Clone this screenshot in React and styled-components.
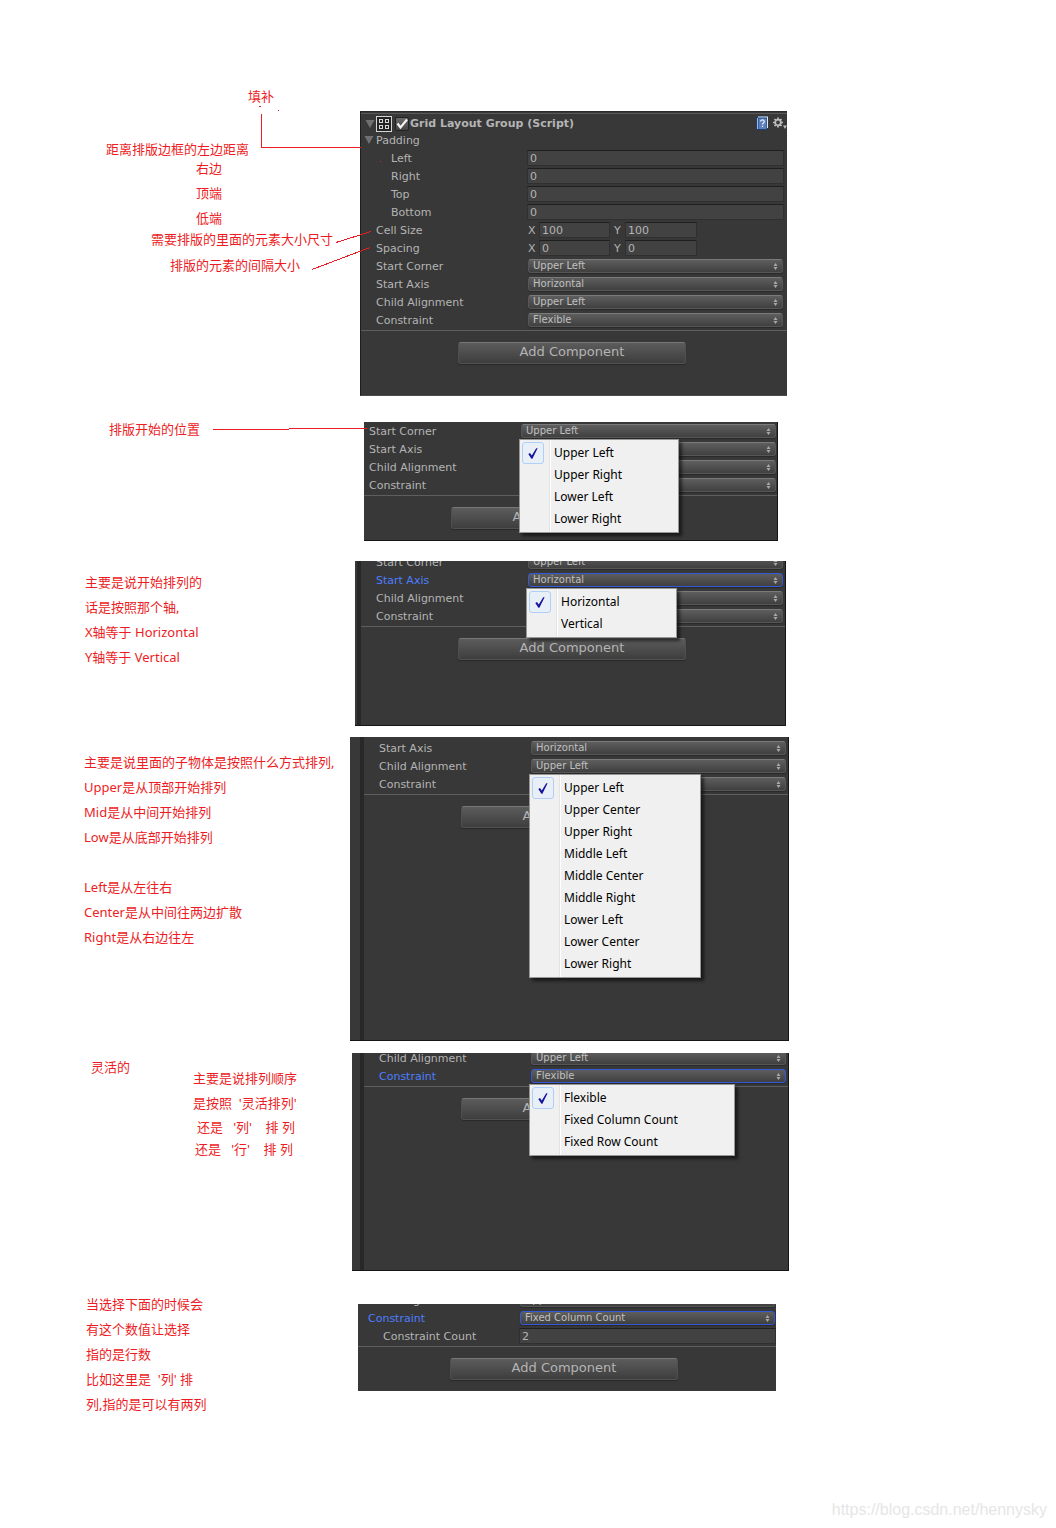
import React, { useId } from 'react';
import styled, { createGlobalStyle, css } from 'styled-components';

const GlobalStyle = createGlobalStyle`
  *, *::before, *::after {
    box-sizing: border-box;
  }
  body {
    margin: 0;
    background: #fff;
  }
`

/* Page and annotations */

const Page = styled.main`
  display: flex;
  flex-direction: column;
  padding: 87px 0 8px;
  font-family: "Noto Sans", "Noto Sans CJK SC", sans-serif;
  font-size: 13px;
`
const Section = styled.section`
  position: relative;
  display: grid;
  grid-template-columns: ${p => p.$left}px minmax(0, ${p => p.$width}px);
  align-items: start;
  margin-top: ${p => p.$gap || 0}px;
`
const NoteColumns = styled.div`
  display: flex;
  align-items: flex-start;
`
const Notes = styled.div`
  display: flex;
  flex-direction: column;
  padding: ${p => p.$top || 0}px 0 0 ${p => p.$indent || 0}px;
`
const Note = styled.p`
  margin: ${p => p.$gap || 0}px 0 0;
  padding-left: ${p => p.$indent || 0}px;
  height: ${p => p.$line || 25}px;
  line-height: ${p => p.$line || 25}px;
  font-family: "Noto Sans", "Noto Sans CJK SC", sans-serif;
  font-size: 13px;
  color: #ed1c24;
  white-space: pre;
`
const Leaders = styled.svg`
  position: absolute;
  top: 0;
  left: 0;
  fill: none;
  stroke: #ed1c24;
  shape-rendering: crispEdges;
  pointer-events: none;
`
const Watermark = styled.footer`
  margin-top: 83px;
  padding-right: 9px;
  text-align: right;
  font: 16px/20px "Liberation Sans", Arial, sans-serif;
  color: #e6e6e6;
`

/* Inspector panel */

const Panel = styled.div`
  display: flex;
  margin-top: ${p => p.$top || 0}px;
  overflow: hidden;
  background: #383838;
  font-family: "DejaVu Sans", Verdana, sans-serif;
  font-size: 11px;
  color: #b4b4b4;
  ${p => p.$edge === 'window' && css`
    border-left: 1px solid #1e1e1e;
    border-top: 1px solid #2a2a2a;
    border-bottom: 1px solid #4a4a4a;
  `}
  ${p => p.$edge === 'corner' && css`
    border-right: 1px solid #151515;
    border-bottom: 1px solid #151515;
  `}
`
const Gutter = styled.div`
  flex: none;
  width: ${p => p.$width}px;
  border-right: 4px solid #282828;
`
const Body = styled.div`
  flex: 1;
  min-width: 0;
  margin-top: -${p => p.$clip || 0}px;
  padding: ${p => p.$top || 0}px 0 ${p => p.$bottom}px;
`
const Header = styled.header`
  display: flex;
  align-items: center;
  height: 18px;
  padding: 2px 0 0 4px;
  border-top: 1px solid #5a5a5a;
`
const Title = styled.label`
  flex: 1;
  padding-left: 1px;
  font-weight: bold;
  white-space: nowrap;
`
const Toggle = styled.input`
  appearance: none;
  width: 14px;
  height: 14px;
  margin: 0 0 0 3px;
  border: 1px solid #222;
  border-radius: 2px;
  background: linear-gradient(#6a6a6a, #454545);
`
const ToggleBox = styled.span`
  position: relative;
  display: flex;
  svg {
    position: absolute;
    top: 0;
    left: 3px;
    pointer-events: none;
  }
`
const IconButton = styled.button`
  display: flex;
  margin: 0 0 2px 4px;
  padding: 0;
  border: 0;
  background: none;
`
const GridIconSlot = styled.span`
  display: flex;
  margin-left: 1px;
`
const Foldout = styled.button`
  display: flex;
  align-items: center;
  gap: 2px;
  height: 18px;
  padding: 0 0 0 3px;
  border: 0;
  background: none;
  font: inherit;
  color: inherit;
`
const Row = styled.div`
  position: relative;
  display: grid;
  grid-template-columns: 151px minmax(0, 1fr);
  align-items: center;
  height: 18px;
  padding: 0 ${p => p.$end}px 0 ${p => p.$inset}px;
`
const Label = styled.label`
  padding-left: ${p => (p.$nested ? 15 : 0)}px;
  color: ${p => (p.$active ? '#4c7eff' : 'inherit')};
  white-space: nowrap;
`
const Input = styled.input`
  width: 100%;
  min-width: 0;
  height: 16px;
  padding: 0 2px;
  border: 1px solid #303030;
  border-top-color: #1f1f1f;
  border-radius: 0;
  outline: 0;
  background: #424242;
  font: inherit;
  color: inherit;
`
const Vector = styled.div`
  display: grid;
  grid-template-columns: 12px 71px 15px 72px;
  align-items: center;
  label {
    padding-left: 1px;
  }
  input + label {
    padding-left: 4px;
  }
`
const Popup = styled.div`
  position: relative;
  margin: 0 1px;
  svg {
    position: absolute;
    top: 4px;
    right: 5px;
    pointer-events: none;
  }
`
const Select = styled.select`
  display: block;
  appearance: none;
  width: 100%;
  height: 14px;
  padding: 0 14px 0 4px;
  border: 1px solid ${p => (p.$active ? '#3558d6' : '#565656')};
  border-top-color: ${p => (p.$active ? '#3558d6' : '#7a7a7a')};
  border-radius: 3px;
  outline: 0;
  background: linear-gradient(#5e5e5e, #404040);
  box-shadow: 0 1px 1px #2a2a2a;
  font: 10px/12px "DejaVu Sans", Verdana, sans-serif;
  color: #c0c0c0;
`
const Divider = styled.hr`
  height: 1px;
  margin: 1px 0 0;
  border: 0;
  background: #5e5e5e;
`
const AddButton = styled.button`
  display: block;
  width: 228px;
  height: 22px;
  margin: 11px 0 0 ${p => p.$inset + 82}px;
  padding: 0 0 2px;
  border: 1px solid #505050;
  border-top-color: #777;
  border-radius: 3px;
  background: linear-gradient(#5c5c5c, #3e3e3e);
  box-shadow: 0 1px 1px #2a2a2a;
  font: 13px/16px "DejaVu Sans", Verdana, sans-serif;
  color: #b4b4b4;
`

/* Drop-down menu */

const MenuBox = styled.div`
  position: absolute;
  z-index: 1;
  top: 17px;
  left: ${p => p.$inset + 150}px;
  padding: 2px;
  border: 1px solid #979797;
  background: linear-gradient(90deg, #f0f0f0 27px, #e2e3e3 27px 28px, #fff 28px 29px, #f0f0f0 29px);
  background-origin: content-box;
  box-shadow: 3px 3px 3px rgba(0, 0, 0, 0.55);
`
const MenuItem = styled.button`
  display: flex;
  align-items: center;
  gap: 10px;
  width: 100%;
  height: 22px;
  padding: 0 54px 0 0;
  border: 0;
  background: none;
  font: 12px/16px "Noto Sans", "Noto Sans CJK SC", sans-serif;
  color: #000;
  white-space: nowrap;
`
const CheckCell = styled.span`
  display: flex;
  align-items: center;
  justify-content: center;
  width: 22px;
  height: 22px;
  border: 1px solid ${p => (p.$checked ? '#aecff7' : 'transparent')};
  border-radius: 3px;
  background: ${p => (p.$checked ? '#e9eff7' : 'none')};
`

/* Icons */

const Triangle = () =>
  <svg width="10" height="8" viewBox="0 0 10 8" aria-hidden="true">
    <path d="M0.5 0h9L5 8z" fill="#707070" />
  </svg>

const Arrows = () =>
  <svg width="5" height="7" viewBox="0 0 5 7" aria-hidden="true">
    <path d="M2.5 0L4.5 3h-4zM2.5 7L0.5 4h4z" fill="#a8a8a8" />
  </svg>

const GridIcon = () =>
  <svg width="16" height="16" viewBox="0 0 16 16" aria-hidden="true" shapeRendering="crispEdges">
    <path d="M0.5 0.5h15v15h-15z" fill="#222" stroke="#d6d6d6" />
    <path d="M3.5 3.5h3v3h-3zM9.5 3.5h3v3h-3zM3.5 9.5h3v3h-3zM9.5 9.5h3v3h-3z" fill="none" stroke="#d6d6d6" />
  </svg>

const ToggleMark = () =>
  <svg width="14" height="14" viewBox="0 0 14 14" aria-hidden="true">
    <path d="M2.5 6.5l3 4L12 2.5" fill="none" stroke="#f2f2f2" strokeWidth="2.2" />
  </svg>

const HelpIcon = () =>
  <svg width="13" height="14" viewBox="0 0 13 14" aria-hidden="true">
    <path d="M0 1.5L2 0h10v12l-2 2H0z" fill="#1f3f73" />
    <path d="M2.5 2.5h8V13h-8z" fill="#5b80bd" />
    <path d="M1.5 2v11" stroke="#9fb8dc" fill="none" />
    <path d="M2 1h10M11.5 1v11" stroke="#dfe8f4" fill="none" />
    <path d="M4.7 5.6c0-2.3 3.6-2.3 3.6 0C8.3 7 6.5 7 6.5 8.6M6.5 9.8v1.3" stroke="#e8f0fa" strokeWidth="1.2" fill="none" />
  </svg>

const GearIcon = () =>
  <svg width="14" height="12" viewBox="0 0 14 12" aria-hidden="true">
    <circle cx="5" cy="5.5" r="2.8" fill="none" stroke="#bdbdbd" strokeWidth="1.8" />
    <path d="M5 0.5v2M5 8.5v2M0 5.5h2M8 5.5h2M1.5 2l1.4 1.4M7.1 7.6L8.5 9M8.5 2L7.1 3.4M2.9 7.6L1.5 9" stroke="#bdbdbd" strokeWidth="1.7" />
    <path d="M10 8.5h4L12 12z" fill="#bdbdbd" />
  </svg>

const MenuCheck = () =>
  <svg width="10" height="11" viewBox="0 0 10 11" aria-hidden="true">
    <path d="M0.3 6L2 5 3.8 7.6 8.2 0.2h1.4L4.4 10.8H3.4z" fill="#1414a0" />
  </svg>

/* Rows */

const corners = ['Upper Left', 'Upper Right', 'Lower Left', 'Lower Right'];
const axes = ['Horizontal', 'Vertical'];
const alignments = [
  'Upper Left', 'Upper Center', 'Upper Right',
  'Middle Left', 'Middle Center', 'Middle Right',
  'Lower Left', 'Lower Center', 'Lower Right',
];
const constraints = ['Flexible', 'Fixed Column Count', 'Fixed Row Count'];

const Menu = ({ options, value, inset }) =>
  <MenuBox role="menu" $inset={inset}>
    {options.map(option =>
      <MenuItem key={option} type="button" role="menuitemradio" aria-checked={option === value}>
        <CheckCell $checked={option === value}>
          {option === value && <MenuCheck />}
        </CheckCell>
        {option}
      </MenuItem>
    )}
  </MenuBox>

const PopupRow = ({ label, options, value = options[0], active, open, inset = 15, end = 1 }) => {
  const id = useId();
  return (
    <Row $inset={inset} $end={end}>
      <Label htmlFor={id} $active={active}>{label}</Label>
      <Popup>
        <Select id={id} defaultValue={value} $active={active}>
          {options.map(option => <option key={option}>{option}</option>)}
        </Select>
        <Arrows />
      </Popup>
      {open && <Menu options={options} value={value} inset={inset} />}
    </Row>
  );
}

const FieldRow = ({ label, value, inset = 15, end = 3 }) => {
  const id = useId();
  return (
    <Row $inset={inset} $end={end}>
      <Label htmlFor={id} $nested>{label}</Label>
      <Input id={id} defaultValue={value} />
    </Row>
  );
}

const VectorRow = ({ label, value }) => {
  const id = useId();
  return (
    <Row $inset={15} $end={3} role="group" aria-labelledby={id}>
      <span id={id}>{label}</span>
      <Vector>
        <label htmlFor={`${id}x`}>X</label>
        <Input id={`${id}x`} defaultValue={value} />
        <label htmlFor={`${id}y`}>Y</label>
        <Input id={`${id}y`} defaultValue={value} />
      </Vector>
    </Row>
  );
}

const AddComponent = ({ inset = 15 }) =>
  <>
    <Divider />
    <AddButton type="button" $inset={inset}>Add Component</AddButton>
  </>

const GridLayoutHeader = () =>
  <Header>
    <Triangle />
    <GridIconSlot><GridIcon /></GridIconSlot>
    <ToggleBox>
      <Toggle type="checkbox" id="enabled" defaultChecked />
      <ToggleMark />
    </ToggleBox>
    <Title htmlFor="enabled">Grid Layout Group (Script)</Title>
    <IconButton type="button" aria-label="Help"><HelpIcon /></IconButton>
    <IconButton type="button" aria-label="Settings"><GearIcon /></IconButton>
  </Header>

export default function App() {
  return (
    <>
      <GlobalStyle />
      <Page>
        <Section $left={360} $width={427}>
          <Notes>
            <Note $line={19} $indent={248}>填补</Note>
            <Note $line={19} $indent={106} $gap={34}>距离排版边框的左边距离</Note>
            <Note $line={19} $indent={196}>右边</Note>
            <Note $line={19} $indent={196} $gap={6}>顶端</Note>
            <Note $line={19} $indent={196} $gap={6}>低端</Note>
            <Note $line={19} $indent={151} $gap={2}>需要排版的里面的元素大小尺寸</Note>
            <Note $line={19} $indent={170} $gap={7}>排版的元素的间隔大小</Note>
          </Notes>
          <Panel $top={24} $edge="window">
            <Body $top={1} $bottom={31}>
              <GridLayoutHeader />
              <Foldout type="button"><Triangle />Padding</Foldout>
              <FieldRow label="Left" value="0" />
              <FieldRow label="Right" value="0" />
              <FieldRow label="Top" value="0" />
              <FieldRow label="Bottom" value="0" />
              <VectorRow label="Cell Size" value="100" />
              <VectorRow label="Spacing" value="0" />
              <PopupRow label="Start Corner" options={corners} end={3} />
              <PopupRow label="Start Axis" options={axes} end={3} />
              <PopupRow label="Child Alignment" options={alignments} end={3} />
              <PopupRow label="Constraint" options={constraints} end={3} />
              <AddComponent />
            </Body>
          </Panel>
          <Leaders width="400" height="200" aria-hidden="true">
            <path d="M261.5 27V60.5H361M259 19.5h2M278 23.5h1M380 74.5h1" />
            <path d="M336 155.5L371 144.5M312 182.5L370 160.5" />
          </Leaders>
        </Section>

        <Section $left={364} $width={414} $gap={24}>
          <Notes $indent={109}>
            <Note $line={19}>排版开始的位置</Note>
          </Notes>
          <Panel $top={2} $edge="corner">
            <Body $bottom={11}>
              <PopupRow label="Start Corner" options={corners} open inset={5} end={0} />
              <PopupRow label="Start Axis" options={axes} inset={5} end={0} />
              <PopupRow label="Child Alignment" options={alignments} inset={5} end={0} />
              <PopupRow label="Constraint" options={constraints} inset={5} end={0} />
              <AddComponent inset={5} />
            </Body>
          </Panel>
          <Leaders width="400" height="20" aria-hidden="true">
            <path d="M213 9.5H289M289 8.5H367" />
          </Leaders>
        </Section>

        <Section $left={355} $width={431} $gap={20}>
          <Notes $indent={85} $top={9}>
            <Note>主要是说开始排列的</Note>
            <Note>话是按照那个轴,</Note>
            <Note>X轴等于 Horizontal</Note>
            <Note>Y轴等于 Vertical</Note>
          </Notes>
          <Panel $edge="corner">
            <Gutter $width={6} />
            <Body $clip={8} $bottom={65}>
              <PopupRow label="Start Corner" options={corners} />
              <PopupRow label="Start Axis" options={axes} active open />
              <PopupRow label="Child Alignment" options={alignments} />
              <PopupRow label="Constraint" options={constraints} />
              <AddComponent />
            </Body>
          </Panel>
        </Section>

        <Section $left={350} $width={439} $gap={11}>
          <Notes $indent={84} $top={13}>
            <Note>主要是说里面的子物体是按照什么方式排列,</Note>
            <Note>Upper是从顶部开始排列</Note>
            <Note>Mid是从中间开始排列</Note>
            <Note>Low是从底部开始排列</Note>
            <Note $gap={25}>Left是从左往右</Note>
            <Note>Center是从中间往两边扩散</Note>
            <Note>Right是从右边往左</Note>
          </Notes>
          <Panel $edge="corner">
            <Gutter $width={14} />
            <Body $top={2} $bottom={212}>
              <PopupRow label="Start Axis" options={axes} />
              <PopupRow label="Child Alignment" options={alignments} open />
              <PopupRow label="Constraint" options={constraints} />
              <AddComponent />
            </Body>
          </Panel>
        </Section>

        <Section $left={352} $width={437} $gap={12}>
          <NoteColumns>
            <Notes $indent={91} $top={2}>
              <Note>灵活的</Note>
            </Notes>
            <Notes $indent={63} $top={13}>
              <Note>主要是说排列顺序</Note>
              <Note>{"是按照  '灵活排列'"}</Note>
              <Note $line={22} $indent={4}>{"还是   '列'    排 列"}</Note>
              <Note $line={22} $indent={2}>{"还是   '行'    排 列"}</Note>
            </Notes>
          </NoteColumns>
          <Panel $edge="corner">
            <Gutter $width={12} />
            <Body $clip={4} $bottom={150}>
              <PopupRow label="Child Alignment" options={alignments} />
              <PopupRow label="Constraint" options={constraints} active open />
              <AddComponent />
            </Body>
          </Panel>
        </Section>

        <Section $left={358} $width={418} $gap={21}>
          <Notes $indent={86}>
            <Note>当选择下面的时候会</Note>
            <Note>有这个数值让选择</Note>
            <Note>指的是行数</Note>
            <Note>{"比如这里是  '列' 排"}</Note>
            <Note>列,指的是可以有两列</Note>
          </Notes>
          <Panel $top={12}>
            <Body $clip={13} $bottom={11}>
              <PopupRow label="Child Alignment" options={alignments} inset={10} end={0} />
              <PopupRow label="Constraint" options={constraints} value="Fixed Column Count" active inset={10} end={0} />
              <FieldRow label="Constraint Count" value="2" inset={10} end={0} />
              <AddComponent inset={10} />
            </Body>
          </Panel>
        </Section>

        <Watermark>https://blog.csdn.net/hennysky</Watermark>
      </Page>
    </>
  );
}
